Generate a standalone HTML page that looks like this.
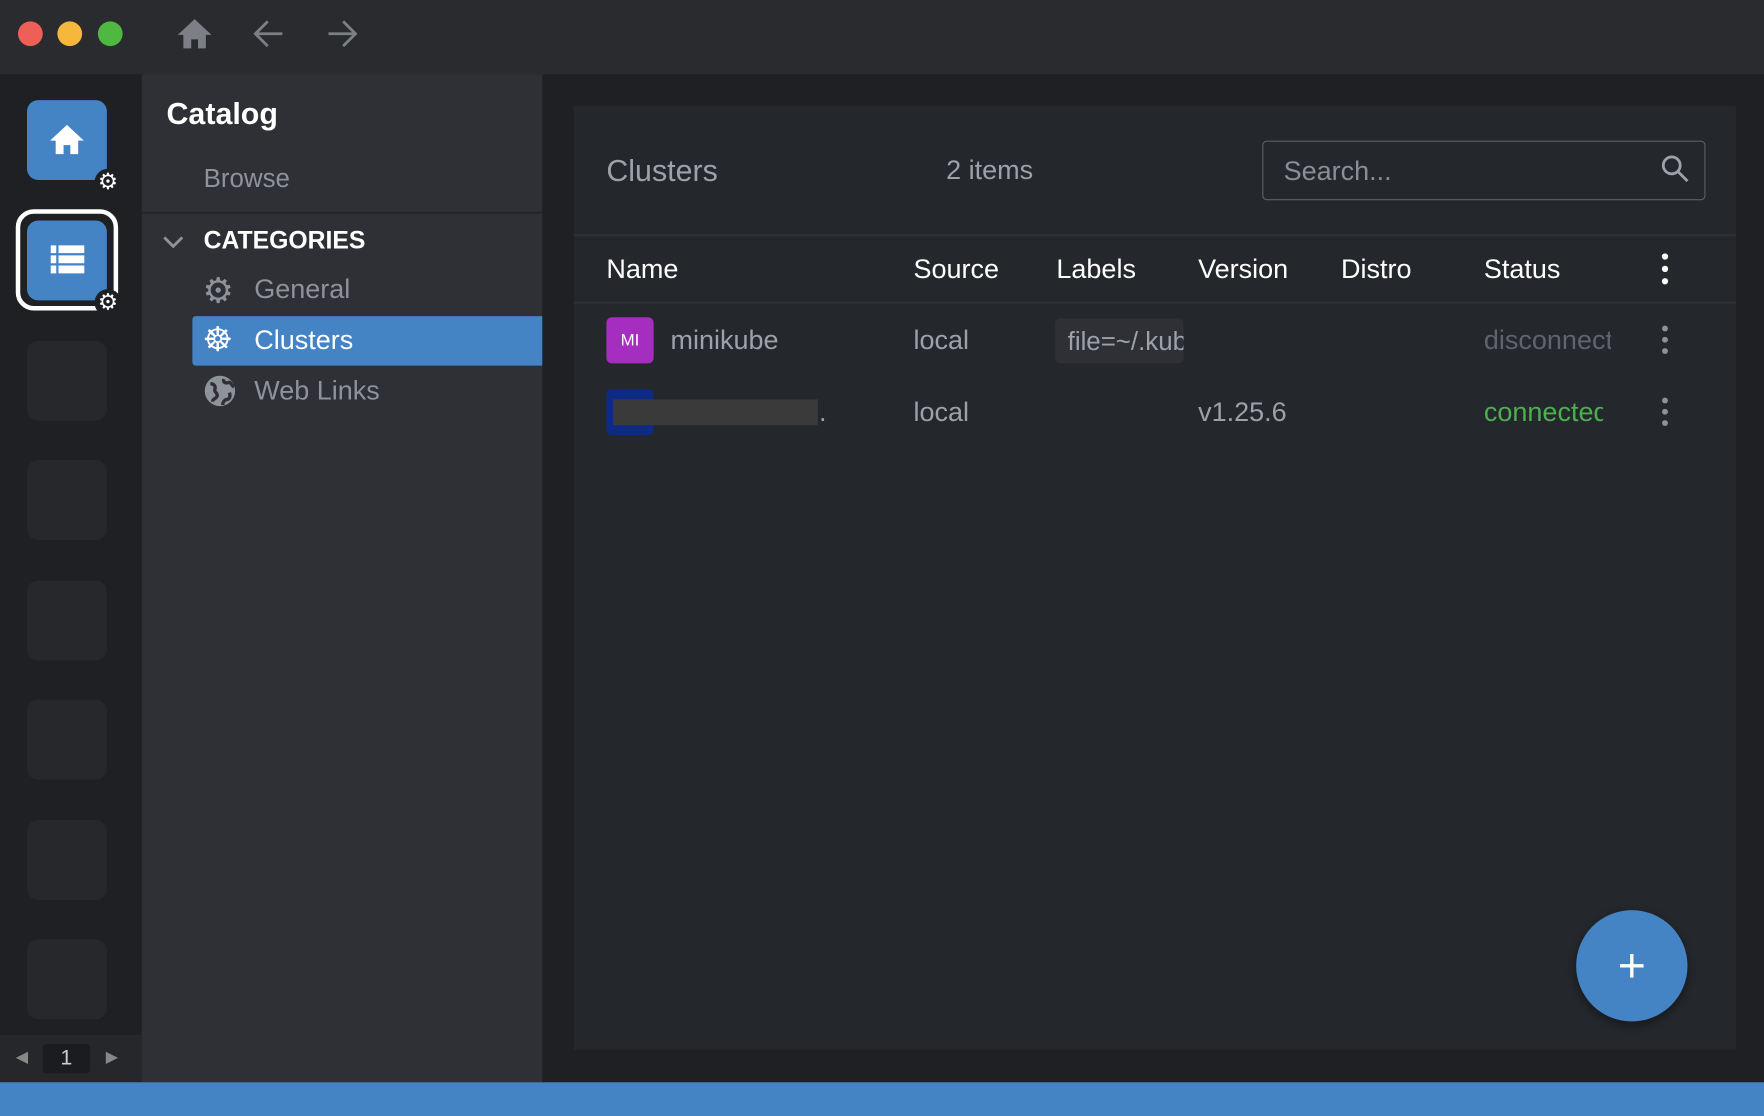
<!DOCTYPE html>
<html><head><meta charset="utf-8"><style>
*{box-sizing:border-box;margin:0;padding:0}
html,body{width:1764px;height:1116px;overflow:hidden;background:#1e2023}
#s{width:1568px;height:992px;transform:scale(1.125);transform-origin:0 0;position:relative;font-family:"Liberation Sans",sans-serif;background:#1e2023}
.a{position:absolute}
.dot{width:22px;height:22px;border-radius:50%;top:19px}
.ic{left:24px;width:71px;height:71px;border-radius:10px;background:#27282c}
.t{white-space:nowrap}
.gear{width:24px;height:24px;border-radius:50%;background:#1f2023}
</style></head><body><div id="s">
<div class="a" style="left:0;top:0;width:1568px;height:66px;background:#2a2b2f"></div>
<div class="a dot" style="left:16px;background:#ee5f57"></div>
<div class="a dot" style="left:51px;background:#f6b73c"></div>
<div class="a dot" style="left:87px;background:#4fb840"></div>
<svg class="a" style="left:157px;top:15px" width="32" height="30" viewBox="0 0 32 30"><path d="M16 2 L1 16 H6 V28 H13 V20 H19 V28 H26 V16 H31 Z" fill="#7c7f86"/></svg>
<svg class="a" style="left:224px;top:16px" width="30" height="28" viewBox="0 0 30 28" fill="none" stroke="#7c7f86" stroke-width="2.5"><path d="M27 14H4M14 3L3 14l11 11"/></svg>
<svg class="a" style="left:289px;top:16px" width="30" height="28" viewBox="0 0 30 28" fill="none" stroke="#7c7f86" stroke-width="2.5"><path d="M3 14h23M16 3l11 11-11 11"/></svg>
<div class="a" style="left:0;top:66px;width:126px;height:896px;background:#1f2023"></div>
<div class="a" style="left:24px;top:89px;width:71px;height:71px;border-radius:10px;background:#4483c4"></div>
<svg class="a" style="left:43px;top:109px" width="33" height="30" viewBox="0 0 32 30"><path d="M16 2 L1 16 H6 V28 H13 V20 H19 V28 H26 V16 H31 Z" fill="#fff"/></svg>
<div class="a gear" style="left:84px;top:150px;color:#fff;font-size:20px;line-height:24px;text-align:center">⚙</div>
<div class="a" style="left:14px;top:186px;width:91px;height:90px;border:4px solid #fff;border-radius:16px"></div>
<div class="a" style="left:24px;top:196px;width:71px;height:71px;border-radius:10px;background:#4483c4"></div>
<svg class="a" style="left:45px;top:218px" width="30" height="26" viewBox="0 0 30 26" fill="#fff"><rect x="0" y="0" width="5" height="7"/><rect x="7" y="0" width="23" height="7"/><rect x="0" y="9" width="5" height="7"/><rect x="7" y="9" width="23" height="7"/><rect x="0" y="18" width="5" height="7"/><rect x="7" y="18" width="23" height="7"/></svg>
<div class="a gear" style="left:84px;top:257px;color:#fff;font-size:20px;line-height:24px;text-align:center">⚙</div>
<div class="a ic" style="top:303px"></div><div class="a ic" style="top:409px"></div><div class="a ic" style="top:516px"></div><div class="a ic" style="top:622px"></div><div class="a ic" style="top:729px"></div><div class="a ic" style="top:835px"></div>
<div class="a" style="left:0;top:920px;width:126px;height:42px;background:#26272b"></div>
<div class="a t" style="left:14px;top:931px;color:#888;font-size:14px">◀</div>
<div class="a" style="left:38px;top:928px;width:42px;height:26px;background:#1b1c1f;border-radius:3px;color:#ccc;font-size:19px;text-align:center;line-height:26px">1</div>
<div class="a t" style="left:94px;top:931px;color:#888;font-size:14px">▶</div>
<div class="a" style="left:126px;top:66px;width:356px;height:896px;background:#2f3035"></div>
<div class="a t" style="left:148px;top:86px;color:#fff;font-size:27px;font-weight:bold">Catalog</div>
<div class="a t" style="left:181px;top:145px;color:#8e9299;font-size:23px">Browse</div>
<div class="a" style="left:126px;top:188px;width:356px;height:2px;background:#25262a"></div>
<svg class="a" style="left:144px;top:208px" width="20" height="14" viewBox="0 0 20 14" fill="none" stroke="#8e9299" stroke-width="2.5"><path d="M2 3l8 8 8-8"/></svg>
<div class="a t" style="left:181px;top:201px;color:#fff;font-size:22px;font-weight:bold">CATEGORIES</div>
<div class="a t" style="left:180px;top:241px;color:#8e9299;font-size:31px;line-height:36px">⚙</div>
<div class="a t" style="left:226px;top:244px;color:#8e9299;font-size:24px">General</div>
<div class="a" style="left:171px;top:281px;width:311px;height:44px;background:#4483c4;border-radius:3px 0 0 3px"></div>
<div class="a t" style="left:180px;top:285px;color:#fff;font-size:30px;line-height:36px">☸</div>
<div class="a t" style="left:226px;top:289px;color:#fff;font-size:24px">Clusters</div>
<svg class="a" style="left:181px;top:333px" width="29" height="29" viewBox="0 0 29 29"><circle cx="14.5" cy="14.5" r="13.5" fill="#8e9299"/><path d="M6 8c3 0 5 2 4 5s3 3 2 6-4 2-4 5M18 4c-1 3 2 4 4 3s3 3 5 4M17 27c0-3 2-5 4-5s3-3 2-6" stroke="#2f3035" stroke-width="3" fill="none"/></svg>
<div class="a t" style="left:226px;top:334px;color:#8e9299;font-size:24px">Web Links</div>
<div class="a" style="left:510px;top:94px;width:1033px;height:839px;background:#24272b"></div>
<div class="a t" style="left:539px;top:137px;color:#9da1a8;font-size:27px">Clusters</div>
<div class="a t" style="left:841px;top:138px;color:#9da1a8;font-size:24px">2 items</div>
<div class="a" style="left:1122px;top:125px;width:394px;height:53px;border:1.5px solid #5c6068;border-radius:4px"></div>
<div class="a t" style="left:1141px;top:139px;color:#8a8e95;font-size:24px">Search...</div>
<svg class="a" style="left:1476px;top:137px" width="26" height="26" viewBox="0 0 26 26" fill="none" stroke="#9da1a8" stroke-width="2.5"><circle cx="10" cy="10" r="7.5"/><path d="M15.5 15.5L24 24"/></svg>
<div class="a" style="left:510px;top:208px;width:1033px;height:2px;background:#2e3136"></div>
<div class="a t" style="left:539px;top:226px;color:#fff;font-size:24px">Name</div>
<div class="a t" style="left:812px;top:226px;color:#fff;font-size:24px">Source</div>
<div class="a t" style="left:939px;top:226px;color:#fff;font-size:24px">Labels</div>
<div class="a t" style="left:1065px;top:226px;color:#fff;font-size:24px">Version</div>
<div class="a t" style="left:1192px;top:226px;color:#fff;font-size:24px">Distro</div>
<div class="a t" style="left:1319px;top:226px;color:#fff;font-size:24px">Status</div>
<svg class="a" style="left:1474px;top:224px" width="12" height="30"><circle cx="6" cy="4" r="2.8" fill="#fff"/><circle cx="6" cy="15" r="2.8" fill="#fff"/><circle cx="6" cy="26" r="2.8" fill="#fff"/></svg>
<div class="a" style="left:510px;top:268px;width:1033px;height:2px;background:#2e3136"></div>
<div class="a" style="left:539px;top:282px;width:42px;height:41px;border-radius:5px;background:#a52ec0;color:#fff;font-size:15px;text-align:center;line-height:41px">MI</div>
<div class="a t" style="left:596px;top:289px;color:#9da1a8;font-size:24px">minikube</div>
<div class="a t" style="left:812px;top:289px;color:#9da1a8;font-size:24px">local</div>
<div class="a" style="left:938px;top:283px;width:114px;height:40px;background:#2f3035;border-radius:4px;overflow:hidden"><div class="t" style="margin:7px 0 0 11px;color:#9da1a8;font-size:23px">file=~/.kube</div></div>
<div class="a" style="left:1319px;top:289px;width:113px;overflow:hidden;color:#5f636a;font-size:24px"><span class="t">disconnected</span></div>
<svg class="a" style="left:1475px;top:288px" width="10" height="28"><circle cx="5" cy="4" r="2.6" fill="#8e9299"/><circle cx="5" cy="14" r="2.6" fill="#8e9299"/><circle cx="5" cy="24" r="2.6" fill="#8e9299"/></svg>
<div class="a" style="left:539px;top:346px;width:42px;height:41px;border-radius:5px;background:#0d2a85"></div>
<div class="a" style="left:545px;top:355px;width:182px;height:23px;background:#3a3a3a"></div>
<div class="a t" style="left:728px;top:353px;color:#9da1a8;font-size:24px">.</div>
<div class="a t" style="left:812px;top:353px;color:#9da1a8;font-size:24px">local</div>
<div class="a t" style="left:1065px;top:353px;color:#9da1a8;font-size:24px">v1.25.6</div>
<div class="a" style="left:1319px;top:353px;width:106px;overflow:hidden;color:#4caf50;font-size:24px"><span class="t">connected</span></div>
<svg class="a" style="left:1475px;top:352px" width="10" height="28"><circle cx="5" cy="4" r="2.6" fill="#8e9299"/><circle cx="5" cy="14" r="2.6" fill="#8e9299"/><circle cx="5" cy="24" r="2.6" fill="#8e9299"/></svg>
<div class="a" style="left:1401px;top:809px;width:99px;height:99px;border-radius:50%;background:#4483c4;box-shadow:0 3px 8px rgba(0,0,0,.4)"></div>
<svg class="a" style="left:1438px;top:846px" width="25" height="25"><path d="M12.5 2v21M2 12.5h21" stroke="#fff" stroke-width="3"/></svg>
<div class="a" style="left:0;top:962px;width:1568px;height:30px;background:#4483c4"></div>
</div></body></html>
